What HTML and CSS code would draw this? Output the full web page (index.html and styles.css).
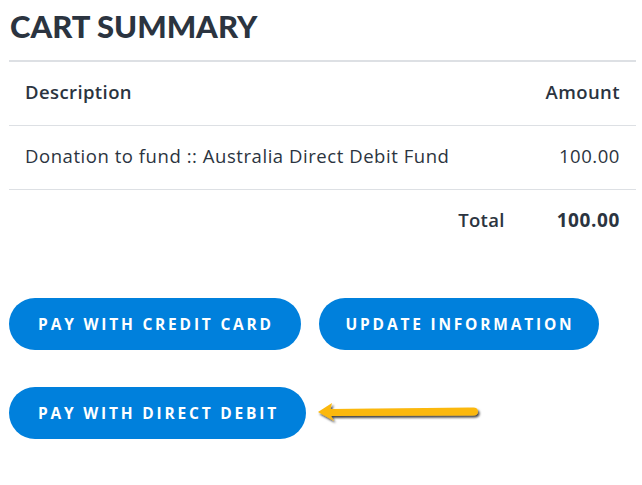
FILE: index.html
```html
<!DOCTYPE html>
<html>
<head>
<meta charset="utf-8">
<link rel="stylesheet" href="styles.css">
</head>
<body>
<div class="page">
  <h1 class="title">CART SUMMARY</h1>
  <div class="cart">
    <div class="row head">
      <span class="desc">Description</span><span class="amt">Amount</span>
    </div>
    <div class="row item">
      <span class="desc">Donation to fund :: Australia Direct Debit Fund</span><span class="amt">100.00</span>
    </div>
    <div class="row total-row">
      <span class="total-label">Total</span>
      <span class="total-value">100.00</span>
    </div>
  </div>
  <div class="buttons">
    <div class="btn-row">
      <button class="btn btn-cc">PAY WITH CREDIT CARD</button>
      <button class="btn btn-upd">UPDATE INFORMATION</button>
    </div>
    <div class="btn-row">
      <button class="btn btn-dd">PAY WITH DIRECT DEBIT</button>
      <svg class="arrow" width="180" height="34" viewBox="0 0 180 34">
        <defs>
          <filter id="sh" x="-10%" y="-50%" width="120%" height="200%">
            <feDropShadow dx="1.5" dy="2" stdDeviation="1.2" flood-color="#000" flood-opacity="0.75"/>
          </filter>
        </defs>
        <path filter="url(#sh)" fill="#fbb80f" d="M2 16 L16 7 L14.5 13 L157 11.5 Q162 11.5 162 15.5 Q162 19.5 157 19.5 L15 20 L18 25 Z"/>
      </svg>
    </div>
  </div>
</div>
</body>
</html>
```
FILE: styles.css
```css
html, body {
  margin: 0;
  padding: 0;
  background: #ffffff;
}
.page {
  padding: 8px 6px 0 9px;
  font-family: "Open Sans", "Lato", sans-serif;
  color: #2b3440;
}
.title {
  margin: 0 0 0 1px;
  font-family: "Lato", sans-serif;
  font-size: 31px;
  font-weight: 900;
  letter-spacing: 0;
  line-height: 36px;
  height: 52px;
  color: #2b3440;
}
.cart {
  width: 627px;
  border-top: 2px solid #dde0e4;
  font-size: 18.5px;
  letter-spacing: 0.55px;
}
.row {
  display: flex;
  align-items: center;
  justify-content: space-between;
  height: 63px;
  padding: 0 16px 4px;
  box-sizing: border-box;
  border-bottom: 1px solid #dde0e4;
}
.head {
  font-weight: 600;
  letter-spacing: 0.4px;
}
.row.head, .row.item {
  height: 64px;
}
.total-row {
  border-bottom: 0;
  justify-content: flex-end;
  font-weight: 700;
  letter-spacing: 0;
}
.total-label { margin-right: 52px; font-weight: 600; letter-spacing: 0.3px; }
.total-value { font-size: 19px; letter-spacing: 0.6px; }
.buttons {
  margin-top: 45px;
  display: flex;
  flex-direction: column;
  gap: 37px;
}
.btn-row {
  display: flex;
  align-items: center;
  gap: 18px;
}
.btn {
  border: 0;
  height: 52px;
  border-radius: 26px;
  background: #0080dc;
  color: #ffffff;
  font-family: "Open Sans", sans-serif;
  font-weight: 700;
  font-size: 15.5px;
  letter-spacing: 2.8px;
  padding: 0 0 0 2px;
  margin: 0;
}
.btn-cc { width: 292px; }
.btn-upd { width: 280px; }
.btn-dd { width: 297px; }
.arrow {
  margin-left: -8px;
  margin-top: 0;
}
```
